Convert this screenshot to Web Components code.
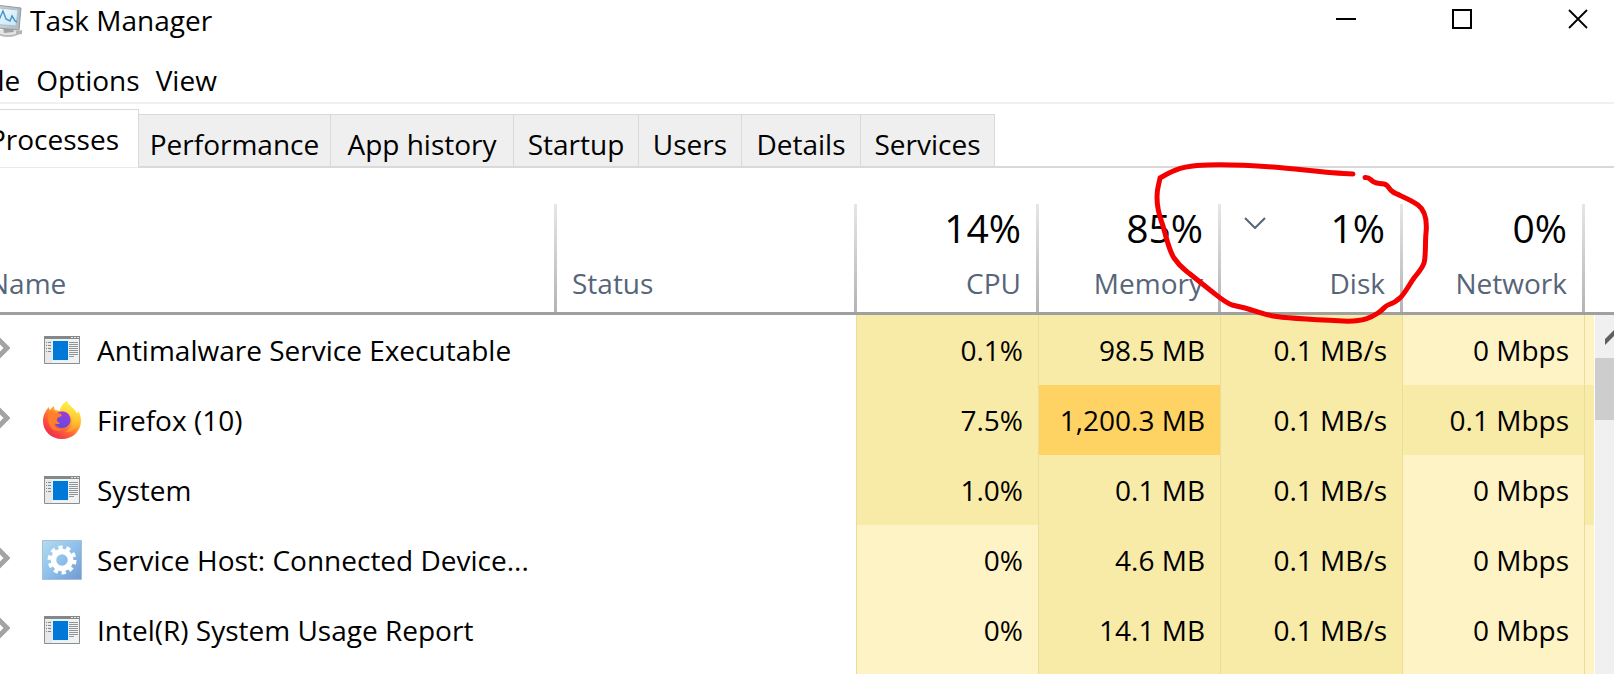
<!DOCTYPE html>
<html lang="en">
<head>
<meta charset="utf-8">
<title>Task Manager</title>
<style>
  :root {
    --color-text: #000;
    --color-label: #566579;
    --color-line: #d9d9d9;
    --color-tab: #efefef;
    --heat-low: #fef3c4;
    --heat-mid: #f8eba8;
    --heat-high: #ffd264;
    --heat-line: #e9dc9c;
    --text: 28px;
    --text-large: 39px;
    --bleed: 24px;
  }

  body {
    margin: 0;
    height: 100vh;
    overflow: hidden;
    background: #fff;
    color: var(--color-text);
    font-family: "Open Sans", "Noto Sans", sans-serif;
    font-size: var(--text);
  }
</style>
</head>
<body>
<tm-window>
  <tm-titlebar slot="title">Task Manager</tm-titlebar>
  <tm-menu slot="menu" items="File,Options,View"></tm-menu>
  <tm-tabs slot="tabs" items="Processes,Performance,App history,Startup,Users,Details,Services" active="Processes"></tm-tabs>
  <tm-processes></tm-processes>
  <tm-scrollbar slot="scrollbar"></tm-scrollbar>
  <tm-marker slot="overlay"></tm-marker>
</tm-window>

<script>
class TmWindow extends HTMLElement {
  connectedCallback() {
    this.attachShadow({ mode: "open" }).innerHTML = `
      <style>
        :host {
          display: flex;
          flex-direction: column;
          position: relative;
          height: 100%;
          margin-left: calc(-1 * var(--bleed));
          overflow: hidden;
        }

        .view {
          display: flex;
          flex: 1;
          min-height: 0;
          padding-top: 36px;
          overflow: hidden;
        }
      </style>
      <slot name="title"></slot>
      <slot name="menu"></slot>
      <slot name="tabs"></slot>
      <main class="view">
        <slot></slot>
        <slot name="scrollbar"></slot>
      </main>
      <slot name="overlay"></slot>
    `;
  }
}

class TmTitlebar extends HTMLElement {
  connectedCallback() {
    this.attachShadow({ mode: "open" }).innerHTML = `
      <style>
        :host {
          display: flex;
          height: 40px;
          line-height: 40px;
          padding-left: 10px;
        }

        .logo {
          width: 36px;
          height: 40px;
          margin-right: 8px;
        }

        .title {
          flex: 1;
        }

        .controls {
          display: flex;
          margin-right: -22px;
        }

        button {
          width: 116px;
          height: 38px;
          padding: 0;
          border: 0;
          background: none;
        }

        button:hover {
          background: #e5e5e5;
        }

        button svg {
          display: block;
          margin: 0 auto;
        }
      </style>
      <svg class="logo" viewBox="0 0 36 40">
        <defs>
          <linearGradient id="screen" x1="0" y1="0" x2="1" y2="1">
            <stop offset="0" stop-color="#fff"/>
            <stop offset="1" stop-color="#c5e4f6"/>
          </linearGradient>
          <linearGradient id="frame" x1="0" y1="0" x2="1" y2="0">
            <stop offset="0" stop-color="#dcdedf"/>
            <stop offset="1" stop-color="#b4b7b9"/>
          </linearGradient>
        </defs>
        <ellipse cx="22" cy="33" rx="11" ry="4" fill="#b9bcbe"/>
        <ellipse cx="22" cy="32" rx="10" ry="3" fill="#e4e5e6"/>
        <path d="M17 26l9 1 2 5-10 1z" fill="#9fa2a4"/>
        <path d="M30 31l6-1v4l-6 1z" fill="#b3b6b8"/>
        <path d="M1 4l34 4-2 22L1 27z" fill="url(#frame)" stroke="#97999b"/>
        <path d="M4 7l28 3-2 16L4 24z" fill="url(#screen)" stroke="#9fc3d8"/>
        <path d="M5 19l6-1 2 2 4-9 3 8 4 2 2-5 3 5 2 1" fill="none" stroke="#4a98ca" stroke-width="1.5"/>
      </svg>
      <span class="title"><slot></slot></span>
      <div class="controls">
        <button type="button" aria-label="Minimize">
          <svg width="20" height="20"><path d="M0 10h20" stroke="#000" stroke-width="2"/></svg>
        </button>
        <button type="button" aria-label="Maximize">
          <svg width="20" height="20"><path d="M1 1h18v18H1z" fill="none" stroke="#000" stroke-width="2"/></svg>
        </button>
        <button type="button" aria-label="Close">
          <svg width="20" height="20"><path d="M1 1l18 18M19 1L1 19" stroke="#000" stroke-width="1.8"/></svg>
        </button>
      </div>
    `;
  }
}

class TmMenu extends HTMLElement {
  connectedCallback() {
    const items = this.getAttribute("items").split(",");

    this.attachShadow({ mode: "open" }).innerHTML = `
      <style>
        :host {
          display: block;
          padding: 20px 0 2px;
          border-bottom: 2px solid #f0f0f0;
        }

        nav {
          display: flex;
          gap: 16px;
        }

        button {
          height: 40px;
          padding: 0;
          border: 0;
          background: none;
          color: inherit;
          font: inherit;
          line-height: 40px;
        }
      </style>
      <nav>${items.map((item) => `<button type="button">${item}</button>`).join("")}</nav>
    `;
  }
}

class TmTabs extends HTMLElement {
  connectedCallback() {
    const active = this.getAttribute("active");
    const tabs = this.getAttribute("items").split(",").map((item) => `
      <button type="button" role="tab" aria-selected="${item === active}">${item}</button>
    `);

    this.attachShadow({ mode: "open" }).innerHTML = `
      <style>
        :host {
          display: block;
          padding-top: 5px;
        }

        .strip {
          display: grid;
          grid-template-columns: 163px 192px 183px 125px 103px 119px 134px 1fr;
          align-items: end;
        }

        button {
          box-sizing: border-box;
          height: 54px;
          padding: 6px 0 0;
          border: solid var(--color-line);
          border-width: 1px 1px 2px 0;
          background: var(--color-tab);
          color: inherit;
          font: inherit;
          line-height: 46px;
          text-align: center;
          white-space: nowrap;
        }

        button[aria-selected="true"] {
          height: 59px;
          padding: 0 19px 0 0;
          border-bottom: 1px solid #ebebeb;
          background: #fff;
          text-align: right;
        }

        .rest {
          height: 2px;
          background: var(--color-line);
        }
      </style>
      <div class="strip" role="tablist">${tabs.join("")}<span class="rest"></span></div>
    `;

    this.shadowRoot.querySelector(".strip").addEventListener("click", (event) => {
      if (event.target.role !== "tab") return;
      this.shadowRoot.querySelectorAll("button").forEach((tab) => {
        tab.setAttribute("aria-selected", tab === event.target);
      });
    });
  }
}

const ICONS = {
  app: `
    <svg width="36" height="28" viewBox="0 0 36 28">
      <path d="M.5.5h35v27H.5z" fill="#f1f2f2" stroke="#8b8e90"/>
      <path d="M0 0h36v3H0z" fill="#85888a"/>
      <path d="M27 1.500h2m1 0h2m1 0h2" stroke="#e6e6e6"/>
      <path d="M1 4h7v23H1z" fill="#e6e8e9"/>
      <path d="M2 6.500h1m1 0h3m-5 3h1m1 0h3m-5 3h1m1 0h3m-5 3h1m1 0h3" stroke="#85888a"/>
      <path d="M8 4h17v21H8z" fill="#dff1fc"/>
      <path d="M9 5h15v19H9z" fill="#0078d7"/>
      <path d="M25 6.500h9m-9 2h9m-9 2h9m-9 2h9m-9 2h9m-9 2h9m-9 2h9m-9 2h5" stroke="#929597"/>
    </svg>`,
  firefox: `
    <svg width="38" height="38" viewBox="0 0 38 38">
      <defs>
        <linearGradient id="fire" x1=".85" y1=".1" x2=".2" y2=".95">
          <stop offset="0" stop-color="#fff04a"/>
          <stop offset=".35" stop-color="#ffb22c"/>
          <stop offset=".62" stop-color="#ff6a35"/>
          <stop offset="1" stop-color="#f0264f"/>
        </linearGradient>
        <linearGradient id="flame" x1=".5" y1="0" x2=".4" y2="1">
          <stop offset="0" stop-color="#fff34d"/>
          <stop offset=".6" stop-color="#ffc52f"/>
          <stop offset="1" stop-color="#ff8a30"/>
        </linearGradient>
        <linearGradient id="globe" x1=".8" y1="0" x2=".3" y2="1">
          <stop offset="0" stop-color="#a33bd8"/>
          <stop offset="1" stop-color="#5a4be0"/>
        </linearGradient>
      </defs>
      <path d="M24 0c-6 4-6 8-7 10l-5-1c-1-1-1-3-1-4-2 1-3 3-4 4-1-1-1-2-1-3C3 9 0 14 0 20c0 10 8 18 19 18s19-8 19-18c0-4-1-8-3-10l-1 3C32 7 25 5 24 0z" fill="url(#fire)"/>
      <path d="M24 0c-5 3-7 7-7 10 8 0 13 5 12 12-1 5-4 8-8 9 8 1 14-4 14-11 0-5-1-7-2-9-2-4-8-6-9-11z" fill="url(#flame)"/>
      <path d="M12 14c3-5 13-5 15 2 2 6-2 11-8 11-5 0-8-4-8-8l4-1-3-3z" fill="url(#globe)"/>
      <path d="M5 11c3-2 6-1 8 1 2 0 4 0 6 2-1 2-4 2-5 3-1 2 0 4 3 5-2 2-5 1-6 0 0 4 4 7 9 6-7 5-17 0-15-17z" fill="#ff7e2c"/>
    </svg>`,
  service: `
    <svg width="40" height="40" viewBox="0 0 40 40">
      <defs>
        <linearGradient id="tile" x1="0" y1="0" x2="1" y2="1">
          <stop offset="0" stop-color="#b3dcee"/>
          <stop offset=".5" stop-color="#8fc0ea"/>
          <stop offset="1" stop-color="#7099d2"/>
        </linearGradient>
      </defs>
      <path d="M.5.5h39v39H.5z" fill="url(#tile)" stroke="#a5c0d8"/>
      <circle cx="20" cy="20" r="12.500" fill="none" stroke="#fff" stroke-width="4" stroke-dasharray="4.200 3.654"/>
      <circle cx="20" cy="20" r="8.500" fill="none" stroke="#fff" stroke-width="5.500"/>
    </svg>`,
};

const COLUMNS = [
  { label: "CPU", total: "14%" },
  { label: "Memory", total: "85%" },
  { label: "Disk", total: "1%", sorted: true },
  { label: "Network", total: "0%" },
];

// heat: one letter per usage column, plus one for the column past Network
const PROCESSES = [
  { name: "Antimalware Service Executable", icon: "app", group: true, usage: ["0.1%", "98.5 MB", "0.1 MB/s", "0 Mbps"], heat: "mmmll" },
  { name: "Firefox (10)", icon: "firefox", group: true, usage: ["7.5%", "1,200.3 MB", "0.1 MB/s", "0.1 Mbps"], heat: "mhmmm" },
  { name: "System", icon: "app", group: false, usage: ["1.0%", "0.1 MB", "0.1 MB/s", "0 Mbps"], heat: "mmmlm" },
  { name: "Service Host: Connected Device...", icon: "service", group: true, usage: ["0%", "4.6 MB", "0.1 MB/s", "0 Mbps"], heat: "lmmll" },
  { name: "Intel(R) System Usage Report", icon: "app", group: true, usage: ["0%", "14.1 MB", "0.1 MB/s", "0 Mbps"], heat: "lmmll" },
  { name: "", usage: ["", "", "", ""], heat: "lmmll" },
];

class TmProcesses extends HTMLElement {
  connectedCallback() {
    this.attachShadow({ mode: "open" }).innerHTML = `
      <style>
        :host {
          display: block;
          flex: 1;
          min-width: 0;
        }

        table {
          width: 100%;
          table-layout: fixed;
          border-spacing: 0;
        }

        .status {
          width: 300px;
        }

        .usage {
          width: 182px;
        }

        .extra {
          width: 10px;
        }

        th {
          --rule: linear-gradient(#e6e6e6, #b4b4b4);
          height: 108px;
          padding: 0;
          border-bottom: 3px solid #a0a0a0;
          background: var(--rule) left / 1px 100% no-repeat, var(--rule) right / 2px 100% no-repeat;
          font-weight: normal;
          text-align: right;
          vertical-align: bottom;
        }

        th:first-child {
          background: var(--rule) right / 2px 100% no-repeat;
        }

        th:last-child {
          background: var(--rule) left / 1px 100% no-repeat;
        }

        th button {
          display: block;
          width: 100%;
          padding: 0 17px 9px;
          border: 0;
          background: none;
          color: inherit;
          font: inherit;
          text-align: inherit;
        }

        th.text {
          text-align: left;
        }

        th.text button {
          padding-left: 16px;
        }

        th.text:first-child button {
          padding-left: 12px;
        }

        .total {
          display: flex;
          justify-content: space-between;
          height: 48px;
          margin-bottom: 11px;
          font-size: var(--text-large);
          line-height: 48px;
        }

        .total svg {
          margin: 13px 0 0 7px;
        }

        .total span {
          margin-left: auto;
        }

        .label {
          display: block;
          color: var(--color-label);
          line-height: 40px;
        }

        td {
          height: 70px;
          padding: 0 15px 0 0;
          text-align: right;
          white-space: nowrap;
        }

        td.l, td.m, td.h {
          border-left: 1px solid var(--heat-line);
        }

        td:last-child {
          padding: 0;
        }

        .l { background: var(--heat-low); }
        .m { background: var(--heat-mid); }
        .h { background: var(--heat-high); }

        .name {
          display: flex;
          align-items: center;
        }

        .toggle {
          width: 34px;
          height: 28px;
          margin-right: 32px;
          padding: 0;
          border: 0;
          background: none;
        }

        .toggle svg {
          display: block;
          margin-left: auto;
        }

        .toggle[hidden] {
          display: block;
          visibility: hidden;
        }

        .icon {
          display: grid;
          place-items: center;
          width: 40px;
          margin-right: 15px;
        }
      </style>
      <table>
        <colgroup>
          <col><col class="status"><col class="usage" span="4"><col class="extra">
        </colgroup>
        <thead>
          <tr>
            <th class="text"><button type="button"><span class="label">Name</span></button></th>
            <th class="text"><button type="button"><span class="label">Status</span></button></th>
            ${COLUMNS.map((column) => this.header(column)).join("")}
            <th></th>
          </tr>
        </thead>
        <tbody>${PROCESSES.map((process) => this.row(process)).join("")}</tbody>
      </table>
    `;
  }

  header({ label, total, sorted }) {
    const arrow = `<svg width="22" height="12"><path d="M1 1l10 10L21 1" fill="none" stroke="#566579" stroke-width="2"/></svg>`;

    return `
      <th${sorted ? ' aria-sort="descending"' : ""}>
        <button type="button">
          <span class="total">${sorted ? arrow : ""}<span>${total}</span></span>
          <span class="label">${label}</span>
        </button>
      </th>`;
  }

  row({ name, icon, group, usage, heat }) {
    const content = name && `
      <div class="name">
        <button class="toggle" type="button" aria-label="Expand ${name}"${group ? "" : " hidden"}>
          <svg width="16" height="28"><path d="M0-1l13 13L0 25" fill="none" stroke="#a3a3a3" stroke-width="5"/></svg>
        </button>
        <span class="icon">${icon ? ICONS[icon] : ""}</span>
        <span>${name}</span>
      </div>`;

    return `
      <tr>
        <td>${content}</td>
        <td></td>
        ${usage.map((value, i) => `<td class="${heat[i]}">${value}</td>`).join("")}
        <td class="${heat[4]}"></td>
      </tr>`;
  }
}

class TmScrollbar extends HTMLElement {
  connectedCallback() {
    this.attachShadow({ mode: "open" }).innerHTML = `
      <style>
        :host {
          display: flex;
          flex-direction: column;
          width: 20px;
          overflow: hidden;
        }

        .corner {
          flex: none;
          height: 108px;
          border-bottom: 3px solid #a0a0a0;
        }

        .track {
          flex: 1;
          margin-left: 1px;
          background: #f0f0f0;
        }

        button {
          display: block;
          width: 38px;
          height: 43px;
          padding: 0;
          border: 0;
          background: none;
        }

        button svg {
          display: block;
          margin: 0 auto;
        }

        .thumb {
          height: 62px;
          background: #cdcdcd;
        }
      </style>
      <div class="corner"></div>
      <div class="track">
        <button type="button" aria-label="Scroll up">
          <svg width="18" height="18"><path d="M0 11L9 2l9 9v6L9 8l-9 9z" fill="#606060"/></svg>
        </button>
        <div class="thumb"></div>
      </div>
    `;
  }
}

// Freehand pen stroke around the Disk column heading
class TmMarker extends HTMLElement {
  connectedCallback() {
    this.attachShadow({ mode: "open" }).innerHTML = `
      <style>
        :host {
          display: block;
          position: absolute;
          top: 155px;
          right: 180px;
          pointer-events: none;
        }

        svg {
          display: block;
        }
      </style>
      <svg width="284" height="175" viewBox="1150 155 284 175" fill="none" stroke="#f40000" stroke-width="5" stroke-linecap="round" stroke-linejoin="round">
        <path d="M1353 174C1325 173 1300 169 1273 167S1215 164 1197 165.500S1170 172 1160 178C1159 185 1157 187 1157 197S1159 215 1162 223S1168 249 1174 258S1184 269 1190 274L1210 290C1218 296 1224 302 1232 305L1245 308C1256 311 1262 314 1273 316S1322 320 1343 321S1372 317 1378 313S1385 306 1388 305S1397 301 1401 297S1411 282 1414 278S1422 269 1424 263S1425 243 1426 233S1426 211 1418 205S1398 195 1393 192S1389 185 1384 184S1378 184 1374 182S1370 177 1365 177.500"/>
      </svg>
    `;
  }
}

customElements.define("tm-window", TmWindow);
customElements.define("tm-titlebar", TmTitlebar);
customElements.define("tm-menu", TmMenu);
customElements.define("tm-tabs", TmTabs);
customElements.define("tm-processes", TmProcesses);
customElements.define("tm-scrollbar", TmScrollbar);
customElements.define("tm-marker", TmMarker);
</script>
</body>
</html>
